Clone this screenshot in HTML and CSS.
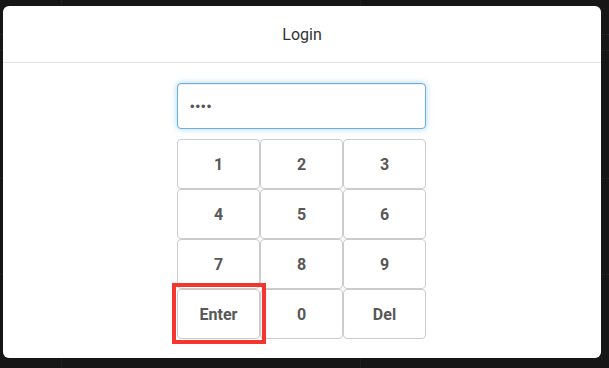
FILE: index.html
```html
<!DOCTYPE html>
<html lang="en">
<head>
    <meta charset="UTF-8">
    <meta name="viewport" content="width=device-width, initial-scale=1.0">
    <title>Login</title>
    <link rel="stylesheet" href="styles.css">
</head>
<body>
    <div class="backdrop">
        <div class="bg-col bg-col-a"></div>
        <div class="bg-col bg-col-b"></div>
        <div class="bg-row bg-row-a"></div>
        <div class="bg-row bg-row-b"></div>
        <div class="bg-row bg-row-c"></div>
        <div class="bg-row bg-row-d"></div>
    </div>

    <div class="modal">
        <div class="modal-header">
            <h4 class="modal-title">Login</h4>
        </div>
        <div class="modal-body">
            <div class="pin-pad">
                <input type="password" class="pin-input" value="1234" readonly>
                <div class="keys">
                    <button class="key">1</button>
                    <button class="key">2</button>
                    <button class="key">3</button>
                    <button class="key">4</button>
                    <button class="key">5</button>
                    <button class="key">6</button>
                    <button class="key">7</button>
                    <button class="key">8</button>
                    <button class="key">9</button>
                    <button class="key key-enter">Enter</button>
                    <button class="key">0</button>
                    <button class="key">Del</button>
                </div>
            </div>
        </div>
    </div>
</body>
</html>
```

FILE: styles.css
```css
* {
    box-sizing: border-box;
}
body {
    margin: 0;
    height: 368px;
    overflow: hidden;
    background-color: #161616;
    font-family: Roboto, "Liberation Sans", Arial, sans-serif;
    position: relative;
}
.backdrop {
    position: absolute;
    top: 0;
    left: 0;
    width: 100%;
    height: 100%;
}
.bg-col {
    position: absolute;
    top: 0;
    width: 1px;
    height: 100%;
    background-color: #1a1f28;
}
.bg-col-a {
    left: 61px;
}
.bg-col-b {
    left: 360px;
}
.bg-row {
    position: absolute;
    left: 0;
    width: 100%;
    height: 1px;
    background-color: #1d2530;
}
.bg-row-a {
    top: 34px;
}
.bg-row-b {
    top: 50px;
    background-color: #202020;
}
.bg-row-c {
    top: 178px;
    background-color: #202020;
}
.bg-row-d {
    top: 274px;
    background-color: #202020;
}
.modal {
    position: absolute;
    top: 6px;
    left: 3px;
    width: 598px;
    height: 352px;
    background-color: #fff;
    border-radius: 6px;
}
.modal-header {
    height: 57px;
    border-bottom: 1px solid #e5e5e5;
    display: flex;
    align-items: center;
    justify-content: center;
}
.modal-title {
    margin: 0;
    font-size: 16px;
    font-weight: 400;
    color: #333;
}
.modal-body {
    display: flex;
    justify-content: center;
    padding: 20px 1px 0 0;
}
.pin-pad {
    width: 249px;
}
.pin-input {
    display: block;
    width: 100%;
    height: 46px;
    padding: 0 12px;
    font-size: 13px;
    color: #555;
    border: 1px solid #66afe9;
    border-radius: 4px;
    outline: none;
    box-shadow: inset 0 1px 1px rgba(0, 0, 0, 0.075), 0 0 6px rgba(102, 175, 233, 0.5);
    letter-spacing: 1px;
}
.keys {
    display: grid;
    grid-template-columns: repeat(3, 1fr);
    margin-top: 10px;
}
.key {
    height: 50px;
    margin: 0;
    padding: 0;
    background-color: #fff;
    border: 1px solid #ccc;
    border-radius: 4px;
    font-family: inherit;
    font-size: 16px;
    font-weight: 700;
    color: #585858;
    cursor: pointer;
}
.key:hover {
    background-color: #e6e6e6;
}
.key-enter {
    position: relative;
}
.key-enter::after {
    content: "";
    position: absolute;
    top: -7px;
    left: -6px;
    right: -7px;
    bottom: -6px;
    border: 4px solid #f3372e;
}
```
